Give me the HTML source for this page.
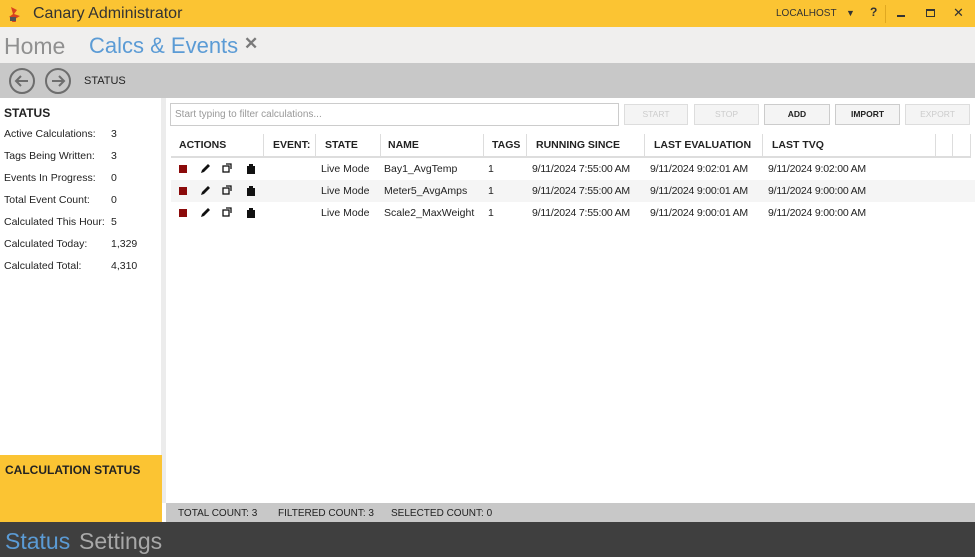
<!DOCTYPE html>
<html><head><style>
*{margin:0;padding:0;box-sizing:border-box}
body{width:975px;height:557px;overflow:hidden;font-family:"Liberation Sans",sans-serif;background:#fff;position:relative;color:#222}
.a{position:absolute;white-space:nowrap}
.s{font-size:10.5px}
.b{font-weight:bold}
.btn{position:absolute;top:104px;height:21px;border:1px solid #ddd;background:#f4f4f4;font-size:8.5px;text-align:center;line-height:19px;color:#ccc}
.btn.on{color:#222;font-weight:bold;border-color:#ccc}
.hd{position:absolute;top:139px;font-size:10.5px;font-weight:bold;color:#222}
.vl{position:absolute;top:134px;width:1px;height:22px;background:#ddd}
.sq{position:absolute;width:8px;height:8px;background:#8b0a0a}
</style></head><body>
<div class="a" style="left:0;top:0;width:975px;height:27px;background:#fbc433"></div>
<svg class="a" style="left:7px;top:5px" width="16" height="17"><path d="M4 2l6 3-3 4 6 2-5 3 1 3H5l1-4-4-1 4-3z" fill="#d9431e"/><rect x="3" y="12" width="6" height="4" fill="#555"/></svg>
<div class="a" style="left:33px;top:5px;font-size:16px;color:#333">Canary Administrator</div>
<div class="a" style="left:776px;top:8px;font-size:10px;color:#333">LOCALHOST</div>
<div class="a" style="left:846px;top:8px;font-size:9px;color:#333">▼</div>
<div class="a" style="left:870px;top:5px;font-size:12px;color:#333;font-weight:bold">?</div>
<div class="a" style="left:885px;top:5px;width:1px;height:18px;background:#e0a820"></div>
<div class="a" style="left:897px;top:15px;width:8px;height:2px;background:#333"></div>
<div class="a" style="left:926px;top:9px;width:9px;height:8px;border:1px solid #333;border-top-width:2px"></div>
<div class="a" style="left:953px;top:5px;font-size:13px;color:#333">✕</div>
<div class="a" style="left:0;top:27px;width:975px;height:36px;background:#f0efee"></div>
<div class="a" style="left:4px;top:33px;font-size:23px;color:#909090">Home</div>
<div class="a" style="left:89px;top:33px;font-size:22px;color:#5b9bd5">Calcs &amp; Events</div>
<div class="a" style="left:244px;top:34px;font-size:17px;color:#7a7a7a;font-weight:bold">✕</div>
<div class="a" style="left:0;top:63px;width:975px;height:35px;background:#c8c8c8"></div>
<svg class="a" style="left:8px;top:67px" width="64" height="28"><circle cx="14" cy="14" r="12" fill="none" stroke="#6d6d6d" stroke-width="2"/><path d="M20 14H8m5-5l-5 5 5 5" fill="none" stroke="#6d6d6d" stroke-width="2"/><circle cx="50" cy="14" r="12" fill="none" stroke="#6d6d6d" stroke-width="2"/><path d="M44 14h12m-5-5l5 5-5 5" fill="none" stroke="#6d6d6d" stroke-width="2"/></svg>
<div class="a" style="left:84px;top:75px;font-size:11px;color:#222">STATUS</div>
<div class="a" style="left:161px;top:98px;width:5px;height:405px;background:#ececec"></div>
<div class="a b" style="left:4px;top:106px;font-size:12px">STATUS</div>
<div class="a s" style="left:4px;top:128px">Active Calculations:</div><div class="a s" style="left:111px;top:128px">3</div>
<div class="a s" style="left:4px;top:150px">Tags Being Written:</div><div class="a s" style="left:111px;top:150px">3</div>
<div class="a s" style="left:4px;top:172px">Events In Progress:</div><div class="a s" style="left:111px;top:172px">0</div>
<div class="a s" style="left:4px;top:194px">Total Event Count:</div><div class="a s" style="left:111px;top:194px">0</div>
<div class="a s" style="left:4px;top:216px">Calculated This Hour:</div><div class="a s" style="left:111px;top:216px">5</div>
<div class="a s" style="left:4px;top:238px">Calculated Today:</div><div class="a s" style="left:111px;top:238px">1,329</div>
<div class="a s" style="left:4px;top:260px">Calculated Total:</div><div class="a s" style="left:111px;top:260px">4,310</div>
<div class="a" style="left:0;top:455px;width:162px;height:67px;background:#fbc433"></div>
<div class="a b" style="left:5px;top:463px;font-size:12px;color:#222">CALCULATION STATUS</div>
<div class="a" style="left:170px;top:103px;width:449px;height:23px;border:1px solid #ccc;background:#fff"></div>
<div class="a" style="left:175px;top:109px;font-size:10px;color:#999">Start typing to filter calculations...</div>
<div class="btn" style="left:624px;width:64px">START</div>
<div class="btn" style="left:694px;width:65px">STOP</div>
<div class="btn on" style="left:764px;width:66px">ADD</div>
<div class="btn on" style="left:835px;width:65px">IMPORT</div>
<div class="btn" style="left:905px;width:65px">EXPORT</div>
<div class="a" style="left:171px;top:156px;width:800px;height:2px;background:#ddd"></div>
<div class="hd" style="left:179px">ACTIONS</div>
<div class="vl" style="left:263px"></div><div class="hd" style="left:273px">EVENT:</div>
<div class="vl" style="left:315px"></div><div class="hd" style="left:325px">STATE</div>
<div class="vl" style="left:380px"></div><div class="hd" style="left:388px">NAME</div>
<div class="vl" style="left:483px"></div><div class="hd" style="left:492px">TAGS</div>
<div class="vl" style="left:526px"></div><div class="hd" style="left:536px">RUNNING SINCE</div>
<div class="vl" style="left:644px"></div><div class="hd" style="left:654px">LAST EVALUATION</div>
<div class="vl" style="left:762px"></div><div class="hd" style="left:772px">LAST TVQ</div>
<div class="vl" style="left:935px"></div><div class="vl" style="left:952px"></div><div class="vl" style="left:970px"></div>
<div class="a" style="left:171px;top:180px;width:804px;height:22px;background:#f5f5f5"></div>
<div class="sq" style="left:179px;top:165px"></div><div class="sq" style="left:179px;top:187px"></div><div class="sq" style="left:179px;top:209px"></div>
<svg class="a" style="left:199px;top:162px" width="60" height="60">
<g id="r"><path d="M2 11l1-3 6-6 2 2-6 6z" fill="#111"/><rect x="24" y="4" width="6" height="6" fill="none" stroke="#111" stroke-width="1.3"/><path d="M27 2h5v5" fill="none" stroke="#111" stroke-width="1.3"/><rect x="48" y="4" width="8" height="8" fill="#111"/><rect x="50" y="2" width="4" height="2" fill="#111"/></g>
<use href="#r" y="22"/><use href="#r" y="44"/></svg>
<div class="a s" style="left:321px;top:158px;line-height:22px">Live Mode<br>Live Mode<br>Live Mode</div>
<div class="a s" style="left:384px;top:158px;line-height:22px">Bay1_AvgTemp<br>Meter5_AvgAmps<br>Scale2_MaxWeight</div>
<div class="a s" style="left:488px;top:158px;line-height:22px">1<br>1<br>1</div>
<div class="a s" style="left:532px;top:158px;line-height:22px;letter-spacing:-0.2px">9/11/2024 7:55:00 AM<br>9/11/2024 7:55:00 AM<br>9/11/2024 7:55:00 AM</div>
<div class="a s" style="left:650px;top:158px;line-height:22px;letter-spacing:-0.2px">9/11/2024 9:02:01 AM<br>9/11/2024 9:00:01 AM<br>9/11/2024 9:00:01 AM</div>
<div class="a s" style="left:768px;top:158px;line-height:22px;letter-spacing:-0.2px">9/11/2024 9:02:00 AM<br>9/11/2024 9:00:00 AM<br>9/11/2024 9:00:00 AM</div>
<div class="a" style="left:166px;top:503px;width:809px;height:19px;background:#c8c8c8"></div>
<div class="a" style="left:178px;top:508px;font-size:10px;color:#222">TOTAL COUNT: 3</div>
<div class="a" style="left:278px;top:508px;font-size:10px;color:#222">FILTERED COUNT: 3</div>
<div class="a" style="left:391px;top:508px;font-size:10px;color:#222">SELECTED COUNT: 0</div>
<div class="a" style="left:0;top:522px;width:975px;height:35px;background:#3f3f3f"></div>
<div class="a" style="left:5px;top:528px;font-size:23px;color:#5b9bd5">Status</div>
<div class="a" style="left:79px;top:528px;font-size:23px;color:#a8a8a8">Settings</div>
</body></html>
